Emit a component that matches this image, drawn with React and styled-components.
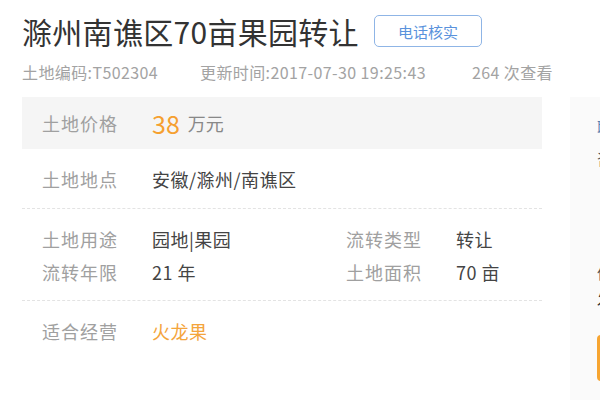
import React from "react";
import styled, { createGlobalStyle } from "styled-components";

const GlobalStyle = createGlobalStyle`
    body {
        margin: 0;
        background: #fff;
        overflow: hidden;
        font-family: "Noto Sans CJK SC", "Noto Sans", sans-serif;
    }
`

const Page = styled.div`
    width: 860px;
    padding: 12px 0 0 22px;
`

const TitleRow = styled.div`
    display: flex;
    align-items: center;
    gap: 15px;
    height: 38px;
`

const Title = styled.h1`
    margin: 0;
    font-size: 30px;
    font-weight: 400;
    color: #333;
    letter-spacing: 0.3px;
`

const VerifyButton = styled.span`
    display: inline-flex;
    align-items: center;
    justify-content: center;
    width: 106px;
    height: 30px;
    border: 1px solid #8fb5e6;
    border-radius: 5px;
    font-size: 15px;
    color: #5a92dc;
`

const Meta = styled.div`
    display: flex;
    margin-top: 11px;
    height: 22px;
    align-items: center;
    font-size: 16px;
    letter-spacing: 0.4px;
    color: #a3a3a3;
`

const MetaItem = styled.span`
    width: ${p => p.w}px;
    flex-shrink: 0;
`

const Body = styled.div`
    display: flex;
    margin-top: 14px;
    gap: 28px;
`

const Main = styled.div`
    width: 520px;
    flex-shrink: 0;
`

const PriceBand = styled.div`
    display: flex;
    align-items: center;
    height: 52px;
    padding-left: 20px;
    background: #f5f5f5;
`

const Section = styled.div`
    padding: ${p => p.pad || "0"};
    padding-left: 20px;
    border-bottom: ${p => p.last ? "none" : "1px dashed #e3e3e3"};
`

const Grid = styled.div`
    display: grid;
    grid-template-columns: 304px 1fr;
`

const Field = styled.div`
    display: flex;
    align-items: center;
    height: ${p => p.h || 33}px;
`

const Label = styled.span`
    width: 110px;
    flex-shrink: 0;
    font-size: 18px;
    letter-spacing: 1px;
    color: #a0a0a0;
`

const Value = styled.span`
    font-size: 18px;
    letter-spacing: 0.5px;
    color: ${p => p.accent ? "#f4a53c" : "#444"};
`

const Price = styled.span`
    font-size: 25px;
    color: #f5a030;
    margin-right: 8px;
`

const Unit = styled.span`
    font-size: 18px;
    color: #888;
`

const Side = styled.div`
    width: 260px;
    height: 320px;
    background: #fafafa;
    padding: 20px 0 0 27px;
    box-sizing: border-box;
`

const SideLine = styled.div`
    font-size: 15px;
    color: ${p => p.c || "#555"};
    margin-top: ${p => p.mt || 0}px;
    line-height: 20px;
`

const SideButton = styled.div`
    margin-top: 26px;
    width: 200px;
    height: 46px;
    border-radius: 4px;
    background: #f7a531;
`

export default () => {
    return (
        <Page>
            <GlobalStyle />
            <TitleRow>
                <Title>滁州南谯区70亩果园转让</Title>
                <VerifyButton>电话核实</VerifyButton>
            </TitleRow>
            <Meta>
                <MetaItem w={178}>土地编码:T502304</MetaItem>
                <MetaItem w={272}>更新时间:2017-07-30 19:25:43</MetaItem>
                <MetaItem w={120}>264 次查看</MetaItem>
            </Meta>
            <Body>
                <Main>
                    <PriceBand>
                        <Label>土地价格</Label>
                        <Price>38</Price>
                        <Unit>万元</Unit>
                    </PriceBand>
                    <Section>
                        <Field h={59}>
                            <Label>土地地点</Label>
                            <Value>安徽/滁州/南谯区</Value>
                        </Field>
                    </Section>
                    <Section pad="13px 0 12px">
                        <Grid>
                            <Field><Label>土地用途</Label><Value>园地|果园</Value></Field>
                            <Field><Label>流转类型</Label><Value>转让</Value></Field>
                            <Field><Label>流转年限</Label><Value>21 年</Value></Field>
                            <Field><Label>土地面积</Label><Value>70 亩</Value></Field>
                        </Grid>
                    </Section>
                    <Section last>
                        <Field h={59}>
                            <Label>适合经营</Label>
                            <Value accent>火龙果</Value>
                        </Field>
                    </Section>
                </Main>
                <Side>
                    <SideLine c="#5b7fae">联系人</SideLine>
                    <SideLine mt={12}>咨询电话</SideLine>
                    <SideLine mt={94}>信息来源</SideLine>
                    <SideLine mt={6} c="#333">发布人</SideLine>
                    <SideButton />
                </Side>
            </Body>
        </Page>
    )
}
